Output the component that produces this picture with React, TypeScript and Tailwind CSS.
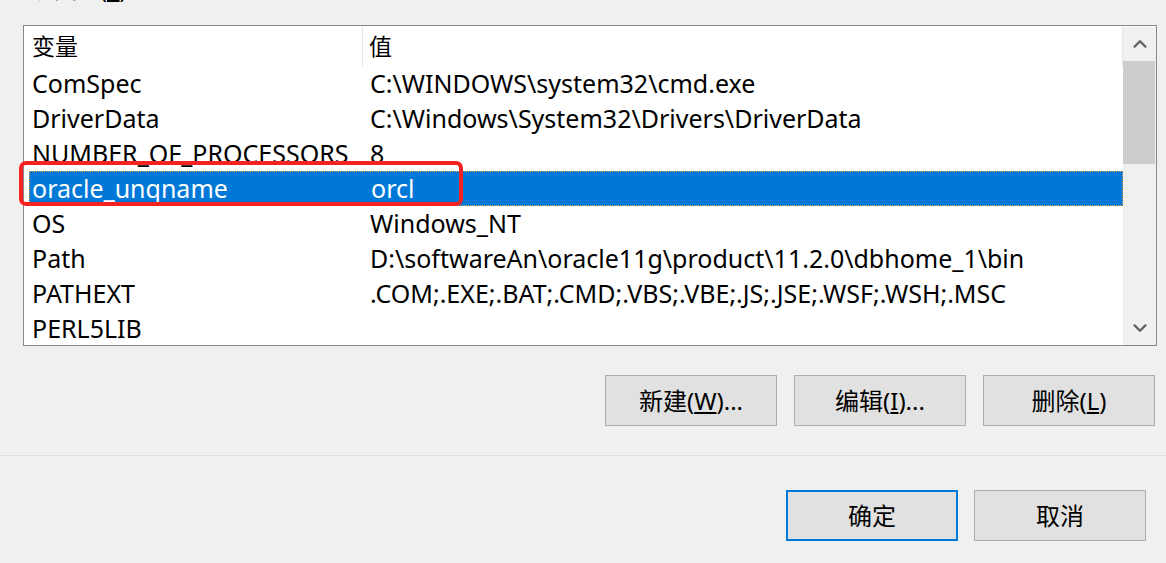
import { ChevronUp, ChevronDown } from "lucide-react";

const rows = [
  { name: "ComSpec", value: "C:\\WINDOWS\\system32\\cmd.exe" },
  { name: "DriverData", value: "C:\\Windows\\System32\\Drivers\\DriverData" },
  { name: "NUMBER_OF_PROCESSORS", value: "8" },
  { name: "oracle_unqname", value: "orcl", selected: true },
  { name: "OS", value: "Windows_NT" },
  { name: "Path", value: "D:\\softwareAn\\oracle11g\\product\\11.2.0\\dbhome_1\\bin" },
  { name: "PATHEXT", value: ".COM;.EXE;.BAT;.CMD;.VBS;.VBE;.JS;.JSE;.WSF;.WSH;.MSC" },
  { name: "PERL5LIB", value: "" },
];

const font = { fontFamily: '"Noto Sans", "Noto Sans CJK SC", sans-serif' };

const Btn = ({ children, primary }: { children: React.ReactNode; primary?: boolean }) => (
  <button
    className={
      "w-[172px] h-[51px] bg-[#e1e1e1] text-[24px] text-black flex items-center justify-center " +
      (primary ? "border-2 border-[#0078d7]" : "border border-[#adadad]")
    }
  >
    {children}
  </button>
);

export default function App() {
  return (
    <div className="w-[1166px] h-[563px] bg-[#f0f0f0] overflow-hidden relative" style={font}>
      {/* clipped group label */}
      <div className="h-[25px] pl-[8px] overflow-hidden">
        <div className="text-[23px] leading-[23px] -mt-[22px] text-black whitespace-nowrap">
          系统变量(<span className="underline">S</span>)
        </div>
      </div>

      {/* list view */}
      <div className="ml-[23px] w-[1134px] h-[321px] border border-[#828790] bg-white flex overflow-hidden">
        <div className="flex-1 flex flex-col">
          <div className="h-[40px] shrink-0 flex items-center text-[23px] text-black">
            <div className="w-[339px] pl-[8px] h-full flex items-center border-r border-[#e5e5e5] my-[1px]">变量</div>
            <div className="flex-1 pl-[6px] h-full flex items-center border-r border-[#e5e5e5]">值</div>
          </div>
          {rows.map((r) => (
            <div
              key={r.name}
              className={
                "h-[35px] shrink-0 flex items-center text-[25px] leading-[35px] " +
                (r.selected
                  ? "bg-[#0078d7] text-white ml-[5px] border border-dotted border-[#e8a050]"
                  : "text-black")
              }
            >
              <div className={r.selected ? "w-[334px] pl-[2px] whitespace-nowrap" : "w-[339px] pl-[8px] whitespace-nowrap"}>
                {r.name}
              </div>
              <div className="flex-1 pl-[7px] whitespace-nowrap">{r.value}</div>
            </div>
          ))}
        </div>
        {/* scrollbar */}
        <div className="w-[33px] shrink-0 bg-[#f0f0f0] flex flex-col mt-[1px]">
          <div className="h-[34px] flex items-center justify-center text-[#606060]">
            <ChevronUp size={22} strokeWidth={2.6} />
          </div>
          <div className="h-[103px] bg-[#cdcdcd] mr-[1px]" />
          <div className="flex-1" />
          <div className="h-[34px] flex items-center justify-center text-[#606060]">
            <ChevronDown size={22} strokeWidth={2.6} />
          </div>
        </div>
      </div>

      {/* action buttons */}
      <div className="flex justify-end gap-[17px] pr-[11px] mt-[29px]">
        <Btn>
          新建(<span className="underline">W</span>)...
        </Btn>
        <Btn>
          编辑(<span className="underline">I</span>)...
        </Btn>
        <Btn>
          删除(<span className="underline">L</span>)
        </Btn>
      </div>

      <div className="h-[1px] bg-[#dfdfdf] mt-[29px]" />

      <div className="flex justify-end gap-[16px] pr-[20px] mt-[34px]">
        <Btn primary>确定</Btn>
        <Btn>取消</Btn>
      </div>

      {/* annotation */}
      <div className="absolute left-[19px] top-[161px] w-[444px] h-[45px] border-[4px] border-[#f52222] rounded-[7px]" />
    </div>
  );
}
